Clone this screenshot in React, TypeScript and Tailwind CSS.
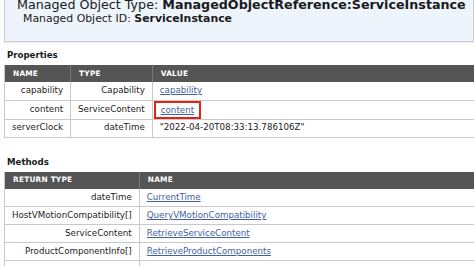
import React from "react";

type PropRow = { name: string; type: string; value: string; link?: boolean; boxed?: boolean };
type MethodRow = { ret: string; name: string };

const PROPS: PropRow[] = [
  { name: "capability", type: "Capability", value: "capability", link: true },
  { name: "content", type: "ServiceContent", value: "content", link: true, boxed: true },
  { name: "serverClock", type: "dateTime", value: "\"2022-04-20T08:33:13.786106Z\"" },
];

const METHODS: MethodRow[] = [
  { ret: "dateTime", name: "CurrentTime" },
  { ret: "HostVMotionCompatibility[]", name: "QueryVMotionCompatibility" },
  { ret: "ServiceContent", name: "RetrieveServiceContent" },
  { ret: "ProductComponentInfo[]", name: "RetrieveProductComponents" },
  { ret: "", name: "" },
];

const th = "bg-[#555555] text-white font-bold text-[7.4px] uppercase text-left h-[17px] px-[8px] border-r border-[#777] last:border-r-0 tracking-[0.2px]";
const td = "h-[18px] px-[7px] text-[8.7px] text-[#222] border-b border-r border-[#c8c8c8] last:border-r-0 whitespace-nowrap";
const link = "text-[#41619f] underline underline-offset-[1px]";

export default function App() {
  return (
    <div className="w-[474px] h-[266px] overflow-hidden bg-white font-['DejaVu_Sans',Verdana,sans-serif] text-[#1a1a1a]">
      <div className="ml-[4px] -mt-[4px] h-[46px] border-x border-b border-[#c9ced4] bg-[#eef4fb] pl-[12px] pt-[2px] shadow-[0_1px_1px_rgba(0,0,0,0.08)]">
        <div className="text-[12.7px] leading-[14px] whitespace-nowrap">
          Managed Object Type: <b>ManagedObjectReference:ServiceInstance</b>
        </div>
        <div className="pl-[6px] text-[10.9px] leading-[14px] whitespace-nowrap">
          Managed Object ID: <b>ServiceInstance</b>
        </div>
      </div>

      <div className="ml-[4px] mt-[7px] text-[8.6px] font-bold pl-[3px] leading-[12px]">Properties</div>
      <table className="ml-[4px] mt-[4px] w-[470px] border-collapse border-l border-[#c8c8c8]">
        <thead>
          <tr>
            <th className={`${th} w-[65px]`}>Name</th>
            <th className={`${th} w-[81px]`}>Type</th>
            <th className={th}>Value</th>
          </tr>
        </thead>
        <tbody>
          {PROPS.map((r) => (
            <tr key={r.name}>
              <td className={`${td} text-right`}>{r.name}</td>
              <td className={`${td} text-right`}>{r.type}</td>
              {r.boxed ? (
                <td className={`${td} !px-[1px]`}>
                  <span className="inline-block border-2 border-[#e3231b] px-[5px] leading-[14px]">
                    <span className={link}>{r.value}</span>
                  </span>
                </td>
              ) : (
                <td className={td}>{r.link ? <span className={link}>{r.value}</span> : r.value}</td>
              )}
            </tr>
          ))}
        </tbody>
      </table>

      <div className="ml-[4px] mt-[18px] text-[8.6px] font-bold pl-[3px] leading-[12px]">Methods</div>
      <table className="ml-[4px] mt-[4px] w-[470px] border-collapse border-l border-[#c8c8c8]">
        <thead>
          <tr>
            <th className={`${th} w-[134px]`}>Return Type</th>
            <th className={th}>Name</th>
          </tr>
        </thead>
        <tbody>
          {METHODS.map((m, i) => (
            <tr key={i}>
              <td className={`${td} text-right`}>{m.ret}</td>
              <td className={td}>
                <span className={link}>{m.name}</span>
              </td>
            </tr>
          ))}
        </tbody>
      </table>
    </div>
  );
}
